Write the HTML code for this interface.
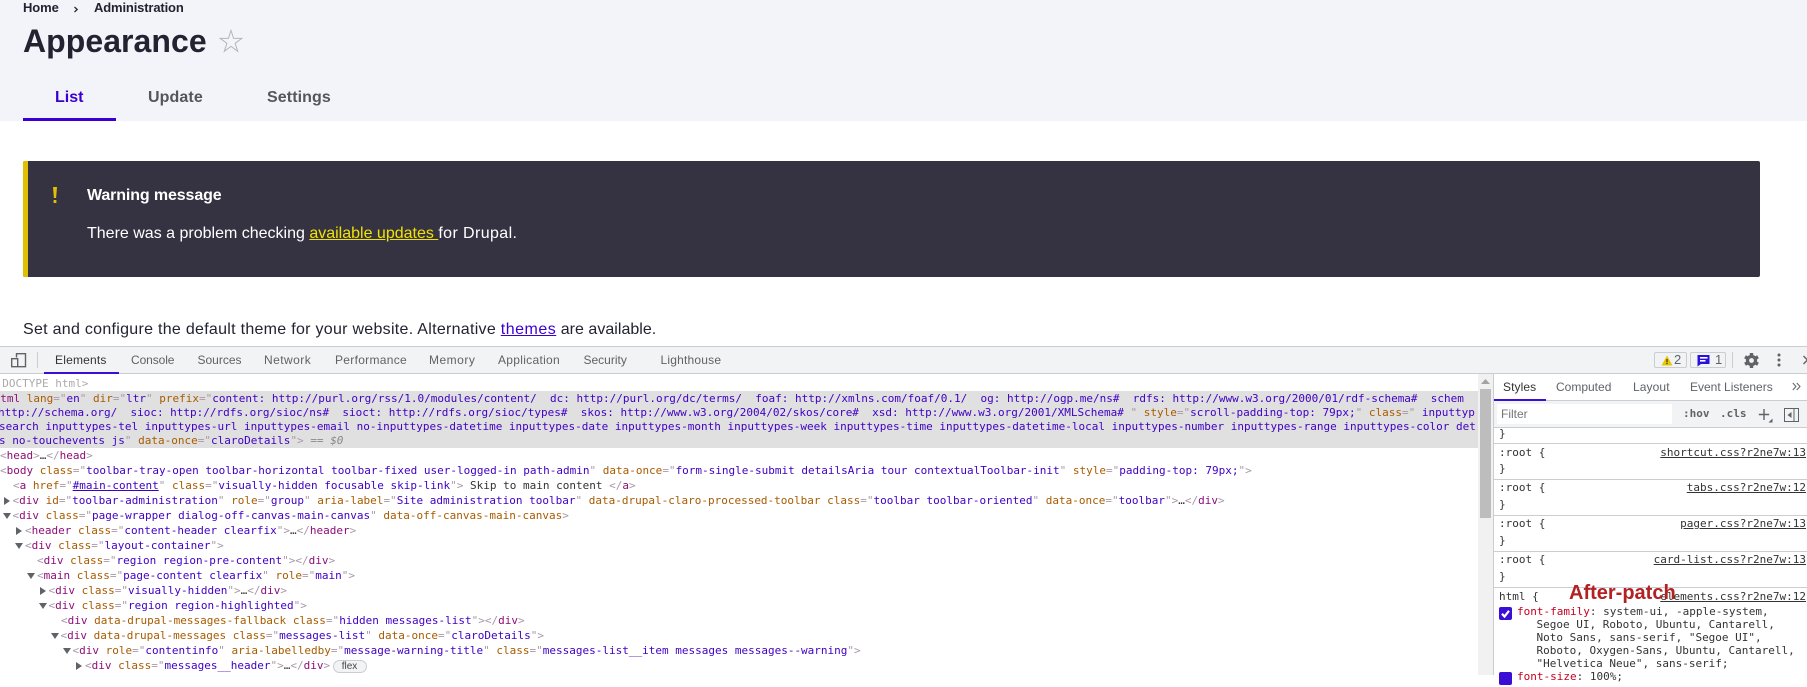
<!DOCTYPE html>
<html lang="en"><head><meta charset="utf-8"><title>Appearance</title>
<style>
html,body{margin:0;padding:0}
body{width:1807px;height:675px;position:relative;overflow:hidden;background:#fff;font-family:"Liberation Sans",sans-serif}
.b{position:absolute}
.t{position:absolute;white-space:pre;line-height:20px;height:20px}
.m{font-family:"DejaVu Sans Mono","Liberation Mono",monospace;font-size:11px;color:#333}
.u{font-size:12px;color:#5f6368}
.g{color:#a898a8}.n{color:#8f0d78}.a{color:#a85b00}.v{color:#3f00c4}
.rule{position:absolute;left:1494px;width:313px;height:1px;background:#cacdd1}
.lk{text-decoration:underline}
</style></head><body>

<div class="b" style="left:0;top:0;width:1807px;height:121px;background:#f3f4f9"></div>
<div class="t" style="left:23px;top:-2px;font-size:13px;font-weight:700;color:#222330;letter-spacing:-.1px">Home</div>
<svg class="b" style="left:73px;top:5px" width="6" height="9"><path d="M1.5 2 4.2 4.5 1.5 7" fill="none" stroke="#222330" stroke-width="1.2"/></svg>
<div class="t" style="left:94px;top:-2px;font-size:13px;font-weight:700;color:#222330;letter-spacing:-.15px">Administration</div>
<div class="t" style="left:23px;top:31px;font-size:32px;font-weight:700;color:#222330;letter-spacing:.05px">Appearance</div>
<svg class="b" style="left:219px;top:29px" width="24" height="24"><polygon points="12,1.5 14.6,9.4 22.8,9.4 16.1,14.3 18.7,22.3 12,17.4 5.3,22.3 7.9,14.3 1.2,9.4 9.4,9.4" fill="none" stroke="#b4b4be" stroke-width="1"/></svg>
<div class="t" style="left:55px;top:88px;font-size:16px;font-weight:700;color:#3b00d1">List</div>
<div class="t" style="left:148px;top:88px;font-size:16px;font-weight:700;color:#55565b;letter-spacing:.1px">Update</div>
<div class="t" style="left:267px;top:88px;font-size:16px;font-weight:700;color:#55565b;letter-spacing:.1px">Settings</div>
<div class="b" style="left:23px;top:118px;width:93px;height:3px;background:#3b00d1"></div>

<div class="b" style="left:23px;top:161px;width:1737px;height:116px;background:#353241;border-radius:2px;overflow:hidden"><div class="b" style="left:0;top:0;width:5px;height:116px;background:#e0c000"></div></div>
<svg class="b" style="left:52px;top:186px" width="6" height="18"><path d="M1 1h4L4.1 12H1.9z" fill="#e0c000"/><rect x="1.6" y="14" width="2.8" height="3" fill="#e0c000"/></svg>
<div class="t" style="left:87px;top:186px;font-size:16px;font-weight:700;color:#fff;letter-spacing:-.12px">Warning message</div>
<div class="t" style="left:87px;top:224px;font-size:16px;color:#fff">There was a problem checking <span class="lk" style="color:#f1e300">available updates </span><span style="letter-spacing:.4px">for Drupal.</span></div>
<div class="t" style="left:23px;top:320px;font-size:16px;color:#222330;letter-spacing:.285px">Set and configure the default theme for your website. Alternative <span class="lk" style="color:#3b00d1;letter-spacing:.5px">themes</span><span style="letter-spacing:.03px"> are available.</span></div>

<div class="b" style="left:0;top:346px;width:1807px;height:1px;background:#cacdd1"></div>
<div class="b" style="left:0;top:347px;width:1807px;height:26px;background:#f1f3f4"></div>
<div class="b" style="left:0;top:373px;width:1807px;height:1px;background:#cacdd1"></div>
<svg class="b" style="left:10px;top:352px" width="17" height="16"><path d="M6.5 5.5V1.7h9v13h-9M1.7 6.7h6v8h-6z" fill="none" stroke="#5f6368" stroke-width="1.4"/></svg>
<div class="b" style="left:37px;top:352px;width:1px;height:16px;background:#cacdd1"></div>
<div class="t u" style="left:55px;top:350px;color:#333;letter-spacing:.2px">Elements</div>
<div class="t u" style="left:131px;top:350px;letter-spacing:-.1px">Console</div>
<div class="t u" style="left:197.5px;top:350px">Sources</div>
<div class="t u" style="left:264px;top:350px;letter-spacing:.45px">Network</div>
<div class="t u" style="left:335px;top:350px;letter-spacing:.3px">Performance</div>
<div class="t u" style="left:429px;top:350px;letter-spacing:.5px">Memory</div>
<div class="t u" style="left:498px;top:350px;letter-spacing:.3px">Application</div>
<div class="t u" style="left:583.5px;top:350px">Security</div>
<div class="t u" style="left:660.5px;top:350px;letter-spacing:.2px">Lighthouse</div>
<div class="b" style="left:44px;top:372px;width:75px;height:2px;background:#3b0ed6"></div>

<div class="b" style="left:1654px;top:352px;width:33px;height:16px;border:1px solid #cacdd1;border-radius:2px;box-sizing:border-box"></div>
<svg class="b" style="left:1661px;top:355px" width="12" height="11"><path d="M6 .5 11.5 10.5H.5z" fill="#e8c600"/><rect x="5.4" y="4" width="1.2" height="3.3" fill="#333"/><rect x="5.4" y="8" width="1.2" height="1.2" fill="#333"/></svg>
<div class="t u" style="left:1674px;top:350px;font-size:13px">2</div>
<div class="b" style="left:1690px;top:352px;width:36px;height:16px;border:1px solid #cacdd1;border-radius:2px;box-sizing:border-box"></div>
<svg class="b" style="left:1697px;top:354px" width="13" height="13"><path d="M.5 1h12v9H4l-3.5 2.5z" fill="#2a10e0"/><rect x="3" y="3" width="7.5" height="1.6" fill="#fff"/><rect x="3" y="6" width="5.5" height="1.6" fill="#fff"/></svg>
<div class="t u" style="left:1715px;top:350px;font-size:13px">1</div>
<div class="b" style="left:1732px;top:352px;width:1px;height:16px;background:#cacdd1"></div>
<svg class="b" style="left:1744px;top:353px" width="15" height="15" viewBox="-7.5 -7.5 15 15"><g fill="#5f6368"><circle r="5.6"/><rect x="-1.7" y="-7.5" width="3.4" height="15"/><rect x="-1.7" y="-7.5" width="3.4" height="15" transform="rotate(60)"/><rect x="-1.7" y="-7.5" width="3.4" height="15" transform="rotate(120)"/></g><circle r="2.4" fill="#f1f3f4"/></svg>
<svg class="b" style="left:1777px;top:353px" width="4" height="14"><circle cx="2" cy="2" r="1.5" fill="#5f6368"/><circle cx="2" cy="7" r="1.5" fill="#5f6368"/><circle cx="2" cy="12" r="1.5" fill="#5f6368"/></svg>
<svg class="b" style="left:1803px;top:355px" width="4" height="10"><path d="M.5 1 4.5 5 .5 9" fill="none" stroke="#5f6368" stroke-width="1.4"/></svg>

<div class="b" style="left:0;top:391px;width:1478px;height:57px;background:#e0e0e0"></div>
<div class="b" style="left:1478px;top:374px;width:15px;height:301px;background:#f1f1f1"></div>
<div class="b" style="left:1480px;top:389px;width:11px;height:129px;background:#bdbdbd"></div>
<svg class="b" style="left:1481px;top:379px" width="9" height="6"><path d="M4.5 0 9 5H0z" fill="#a3a3a3"/></svg>
<div class="b" style="left:1493px;top:374px;width:1px;height:301px;background:#cacdd1"></div>

<div class="t m" style="left:-11px;top:374px;color:#aaa">&lt;!DOCTYPE html&gt;</div>
<div class="t m" style="left:-13px;top:389px"><span class="g">&lt;</span><span class="n">html</span> <span class="a">lang</span><span class="g">="</span><span class="v">en</span><span class="g">"</span> <span class="a">dir</span><span class="g">="</span><span class="v">ltr</span><span class="g">"</span> <span class="a">prefix</span><span class="g">="</span><span class="v">content: http://purl.org/rss/1.0/modules/content/  dc: http://purl.org/dc/terms/  foaf: http://xmlns.com/foaf/0.1/  og: http://ogp.me/ns#  rdfs: http://www.w3.org/2000/01/rdf-schema#  schem</span></div>
<div class="t m" style="left:-2px;top:403px"><span class="v">http://schema.org/  sioc: http://rdfs.org/sioc/ns#  sioct: http://rdfs.org/sioc/types#  skos: http://www.w3.org/2004/02/skos/core#  xsd: http://www.w3.org/2001/XMLSchema# </span><span class="g">"</span> <span class="a">style</span><span class="g">="</span><span class="v">scroll-padding-top: 79px;</span><span class="g">"</span> <span class="a">class</span><span class="g">="</span><span class="v"> inputtyp</span></div>
<div class="t m" style="left:-1px;top:417px"><span class="v">search inputtypes-tel inputtypes-url inputtypes-email no-inputtypes-datetime inputtypes-date inputtypes-month inputtypes-week inputtypes-time inputtypes-datetime-local inputtypes-number inputtypes-range inputtypes-color det</span></div>
<div class="t m" style="left:-1px;top:431px"><span class="v">s no-touchevents js</span><span class="g">"</span> <span class="a">data-once</span><span class="g">="</span><span class="v">claroDetails</span><span class="g">"&gt;</span> <span style="color:#888">== <i>$0</i></span></div>
<div class="t m" style="left:0;top:446px"><span class="g">&lt;</span><span class="n">head</span><span class="g">&gt;</span>…<span class="g">&lt;/</span><span class="n">head</span><span class="g">&gt;</span></div>
<div class="t m" style="left:0;top:461px"><span class="g">&lt;</span><span class="n">body</span> <span class="a">class</span><span class="g">="</span><span class="v">toolbar-tray-open toolbar-horizontal toolbar-fixed user-logged-in path-admin</span><span class="g">"</span> <span class="a">data-once</span><span class="g">="</span><span class="v">form-single-submit detailsAria tour contextualToolbar-init</span><span class="g">"</span> <span class="a">style</span><span class="g">="</span><span class="v">padding-top: 79px;</span><span class="g">"&gt;</span></div>
<div class="t m" style="left:13px;top:476px"><span class="g">&lt;</span><span class="n">a</span> <span class="a">href</span><span class="g">="</span><span class="lk" style="color:#3f00c4">#main-content</span><span class="g">"</span> <span class="a">class</span><span class="g">="</span><span class="v">visually-hidden focusable skip-link</span><span class="g">"&gt;</span> Skip to main content <span class="g">&lt;/</span><span class="n">a</span><span class="g">&gt;</span></div>
<svg class="b" style="left:4px;top:497px" width="6" height="8"><path d="M0 0 6 4 0 8z" fill="#5f6368"/></svg>
<div class="t m" style="left:12.5px;top:491px"><span class="g">&lt;</span><span class="n">div</span> <span class="a">id</span><span class="g">="</span><span class="v">toolbar-administration</span><span class="g">"</span> <span class="a">role</span><span class="g">="</span><span class="v">group</span><span class="g">"</span> <span class="a">aria-label</span><span class="g">="</span><span class="v">Site administration toolbar</span><span class="g">"</span> <span class="a">data-drupal-claro-processed-toolbar</span> <span class="a">class</span><span class="g">="</span><span class="v">toolbar toolbar-oriented</span><span class="g">"</span> <span class="a">data-once</span><span class="g">="</span><span class="v">toolbar</span><span class="g">"&gt;</span>…<span class="g">&lt;/</span><span class="n">div</span><span class="g">&gt;</span></div>
<svg class="b" style="left:3px;top:513px" width="8" height="6"><path d="M0 0H8L4 6z" fill="#5f6368"/></svg>
<div class="t m" style="left:12.5px;top:506px"><span class="g">&lt;</span><span class="n">div</span> <span class="a">class</span><span class="g">="</span><span class="v">page-wrapper dialog-off-canvas-main-canvas</span><span class="g">"</span> <span class="a">data-off-canvas-main-canvas</span><span class="g">&gt;</span></div>
<svg class="b" style="left:16px;top:527px" width="6" height="8"><path d="M0 0 6 4 0 8z" fill="#5f6368"/></svg>
<div class="t m" style="left:25px;top:521px"><span class="g">&lt;</span><span class="n">header</span> <span class="a">class</span><span class="g">="</span><span class="v">content-header clearfix</span><span class="g">"&gt;</span>…<span class="g">&lt;/</span><span class="n">header</span><span class="g">&gt;</span></div>
<svg class="b" style="left:15px;top:543px" width="8" height="6"><path d="M0 0H8L4 6z" fill="#5f6368"/></svg>
<div class="t m" style="left:25px;top:536px"><span class="g">&lt;</span><span class="n">div</span> <span class="a">class</span><span class="g">="</span><span class="v">layout-container</span><span class="g">"&gt;</span></div>
<div class="t m" style="left:37px;top:551px"><span class="g">&lt;</span><span class="n">div</span> <span class="a">class</span><span class="g">="</span><span class="v">region region-pre-content</span><span class="g">"&gt;&lt;/</span><span class="n">div</span><span class="g">&gt;</span></div>
<svg class="b" style="left:27px;top:573px" width="8" height="6"><path d="M0 0H8L4 6z" fill="#5f6368"/></svg>
<div class="t m" style="left:37px;top:566px"><span class="g">&lt;</span><span class="n">main</span> <span class="a">class</span><span class="g">="</span><span class="v">page-content clearfix</span><span class="g">"</span> <span class="a">role</span><span class="g">="</span><span class="v">main</span><span class="g">"&gt;</span></div>
<svg class="b" style="left:40px;top:587px" width="6" height="8"><path d="M0 0 6 4 0 8z" fill="#5f6368"/></svg>
<div class="t m" style="left:48.5px;top:581px"><span class="g">&lt;</span><span class="n">div</span> <span class="a">class</span><span class="g">="</span><span class="v">visually-hidden</span><span class="g">"&gt;</span>…<span class="g">&lt;/</span><span class="n">div</span><span class="g">&gt;</span></div>
<svg class="b" style="left:39px;top:603px" width="8" height="6"><path d="M0 0H8L4 6z" fill="#5f6368"/></svg>
<div class="t m" style="left:48.5px;top:596px"><span class="g">&lt;</span><span class="n">div</span> <span class="a">class</span><span class="g">="</span><span class="v">region region-highlighted</span><span class="g">"&gt;</span></div>
<div class="t m" style="left:61px;top:611px"><span class="g">&lt;</span><span class="n">div</span> <span class="a">data-drupal-messages-fallback</span> <span class="a">class</span><span class="g">="</span><span class="v">hidden messages-list</span><span class="g">"&gt;&lt;/</span><span class="n">div</span><span class="g">&gt;</span></div>
<svg class="b" style="left:51px;top:633px" width="8" height="6"><path d="M0 0H8L4 6z" fill="#5f6368"/></svg>
<div class="t m" style="left:60.5px;top:626px"><span class="g">&lt;</span><span class="n">div</span> <span class="a">data-drupal-messages</span> <span class="a">class</span><span class="g">="</span><span class="v">messages-list</span><span class="g">"</span> <span class="a">data-once</span><span class="g">="</span><span class="v">claroDetails</span><span class="g">"&gt;</span></div>
<svg class="b" style="left:63px;top:648px" width="8" height="6"><path d="M0 0H8L4 6z" fill="#5f6368"/></svg>
<div class="t m" style="left:72.5px;top:641px"><span class="g">&lt;</span><span class="n">div</span> <span class="a">role</span><span class="g">="</span><span class="v">contentinfo</span><span class="g">"</span> <span class="a">aria-labelledby</span><span class="g">="</span><span class="v">message-warning-title</span><span class="g">"</span> <span class="a">class</span><span class="g">="</span><span class="v">messages-list__item messages messages--warning</span><span class="g">"&gt;</span></div>
<svg class="b" style="left:76px;top:662px" width="6" height="8"><path d="M0 0 6 4 0 8z" fill="#5f6368"/></svg>
<div class="t m" style="left:85px;top:656px"><span class="g">&lt;</span><span class="n">div</span> <span class="a">class</span><span class="g">="</span><span class="v">messages__header</span><span class="g">"&gt;</span>…<span class="g">&lt;/</span><span class="n">div</span><span class="g">&gt;</span></div>
<div class="t" style="left:332.5px;top:660px;width:34px;height:13px;line-height:12px;box-sizing:border-box;border:1px solid #cacdd1;border-radius:7px;background:#f1f3f4;font-size:10px;color:#444;text-align:center">flex</div>

<div class="t u" style="left:1503px;top:377px;color:#333;letter-spacing:.1px">Styles</div>
<div class="t u" style="left:1556px;top:377px">Computed</div>
<div class="t u" style="left:1633px;top:377px;letter-spacing:.1px">Layout</div>
<div class="t u" style="left:1690px;top:377px">Event Listeners</div>
<svg class="b" style="left:1792px;top:382px" width="9" height="9"><path d="M.8 1 4 4.5.8 8M4.8 1 8 4.5 4.8 8" fill="none" stroke="#5f6368" stroke-width="1"/></svg>
<div class="b" style="left:1494px;top:400px;width:313px;height:1px;background:#cacdd1"></div>
<div class="b" style="left:1494px;top:399px;width:52px;height:2px;background:#3b0ed6"></div>
<div class="b" style="left:1494px;top:401px;width:313px;height:26px;background:#f1f3f4"></div>
<div class="b" style="left:1497px;top:404px;width:175px;height:20px;background:#fff"></div>
<div class="t u" style="left:1501px;top:404px;color:#757575">Filter</div>
<div class="t m" style="left:1683px;top:404px;font-weight:700;color:#5f6368">:hov</div>
<div class="t m" style="left:1720px;top:404px;font-weight:700;color:#5f6368">.cls</div>
<svg class="b" style="left:1758px;top:408px" width="18" height="17"><path d="M6 1v11M.8 6.5h10.4" stroke="#5f6368" stroke-width="1.4" fill="none"/><path d="M14.5 10.5v4h-4z" fill="#5f6368"/></svg>
<svg class="b" style="left:1784px;top:408px" width="15" height="14"><rect x=".5" y=".5" width="14" height="13" fill="none" stroke="#5f6368"/><path d="M10 .5v13" stroke="#5f6368"/><path d="M7.5 4v6L3.5 7z" fill="#5f6368"/></svg>
<div class="rule" style="top:427px"></div>
<div class="t m" style="left:1499px;top:424px">}</div>
<div class="rule" style="top:443px"></div>
<div class="t m" style="left:1499px;top:443px">:root {</div>
<div class="t m lk" style="right:1px;top:443px">shortcut.css?r2ne7w:13</div>
<div class="t m" style="left:1499px;top:459px">}</div>
<div class="rule" style="top:479px"></div>
<div class="t m" style="left:1499px;top:478px">:root {</div>
<div class="t m lk" style="right:1px;top:478px">tabs.css?r2ne7w:12</div>
<div class="t m" style="left:1499px;top:495px">}</div>
<div class="rule" style="top:515px"></div>
<div class="t m" style="left:1499px;top:514px">:root {</div>
<div class="t m lk" style="right:1px;top:514px">pager.css?r2ne7w:13</div>
<div class="t m" style="left:1499px;top:531px">}</div>
<div class="rule" style="top:551px"></div>
<div class="t m" style="left:1499px;top:550px">:root {</div>
<div class="t m lk" style="right:1px;top:550px">card-list.css?r2ne7w:13</div>
<div class="t m" style="left:1499px;top:567px">}</div>
<div class="rule" style="top:587px"></div>
<div class="t m" style="left:1499px;top:587px">html {</div>
<div class="t m lk" style="right:1px;top:587px">elements.css?r2ne7w:12</div>
<div class="t" style="left:1569px;top:583px;font-size:20px;font-weight:700;color:#b22222">After-patch</div>
<svg class="b" style="left:1499px;top:607px" width="13" height="13"><rect width="13" height="13" rx="2" fill="#3b0ed6"/><path d="M3 6.8 5.5 9.5 10 3.8" fill="none" stroke="#fff" stroke-width="2.2"/></svg>
<div class="t m" style="left:1517px;top:602px"><span style="color:#c80020">font-family</span>: system-ui, -apple-system,</div>
<div class="t m" style="left:1536.5px;top:615px">Segoe UI, Roboto, Ubuntu, Cantarell,</div>
<div class="t m" style="left:1536.5px;top:628px">Noto Sans, sans-serif, "Segoe UI",</div>
<div class="t m" style="left:1536.5px;top:641px">Roboto, Oxygen-Sans, Ubuntu, Cantarell,</div>
<div class="t m" style="left:1536.5px;top:654px">"Helvetica Neue", sans-serif;</div>
<svg class="b" style="left:1499px;top:672px" width="13" height="13"><rect width="13" height="13" rx="2" fill="#3b0ed6"/></svg>
<div class="t m" style="left:1517px;top:667px"><span style="color:#c80020">font-size</span>: 100%;</div>
</body></html>
